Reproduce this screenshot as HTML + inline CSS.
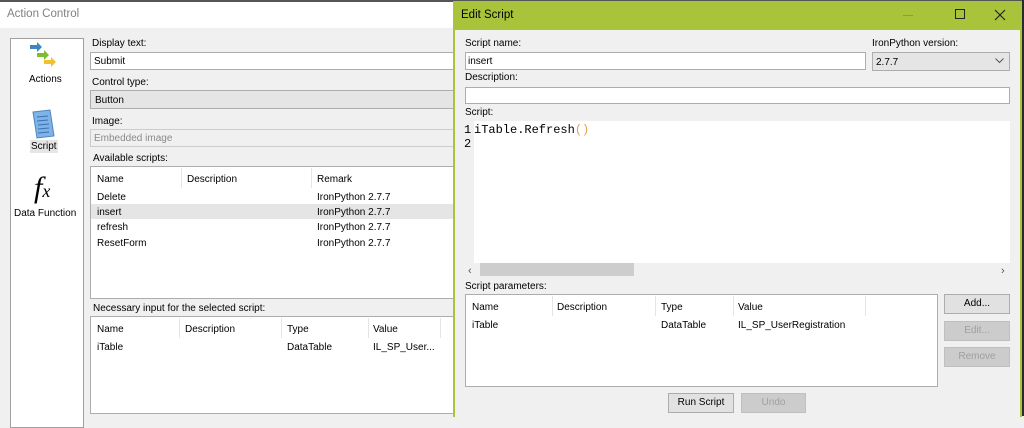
<!DOCTYPE html>
<html><head><meta charset="utf-8"><style>
*{margin:0;padding:0;box-sizing:border-box}
body{width:1024px;height:416px;overflow:hidden;background:#f0f0f0;font-family:"Liberation Sans",sans-serif;font-size:10px;color:#000;position:relative}
.a{position:absolute;white-space:nowrap}
.box{position:absolute;background:#fff;border:1px solid #adadad}
.btn{position:absolute;background:#e1e1e1;border:1px solid #adadad;text-align:center;line-height:17px}
.dis{background:#ccc;border-color:#bfbfbf;color:#a0a0a0}
.sep{position:absolute;width:1px;background:#e5e5e5}
</style></head><body>
<div class="a" style="left:0;top:0;width:1024px;height:2px;background:#555"></div>
<div class="a" style="left:0;top:2px;width:454px;height:26px;background:#fff"></div>
<div class="a" style="left:7px;top:8px;font-size:11.5px;color:#808080">Action Control</div>

<div class="box" style="left:10px;top:38px;width:74px;height:390px;border-color:#a0a0a0"></div>
<svg class="a" style="left:28px;top:40px" width="32" height="30" viewBox="0 0 32 30">
<path d="M2 5h7v-3l5 5-5 5v-3h-7z" fill="#3f86c0"/>
<path d="M9 13h7v-3l5 5-5 5v-3h-7z" fill="#7cbf2e"/>
<path d="M16 20h7v-3l5 5-5 5v-3h-7z" fill="#f2c12e"/>
</svg>
<div class="a" style="left:29px;top:74px">Actions</div>
<svg class="a" style="left:31px;top:109px" width="26" height="30" viewBox="0 0 26 30">
<path d="M2 3l17-2 4 26-17 2z" fill="#7fb2e6" stroke="#4d86c4"/>
<path d="M6 8l11-1M6 12l11-1M7 16l11-1M7 20l11-1M7 24l11-1" stroke="#3a72b0" stroke-width="1"/>
</svg>
<div class="a" style="left:30px;top:140px;background:#e5e5e5;padding:1px 1px">Script</div>
<div class="a" style="left:34px;top:173px;font-family:'Liberation Serif',serif;font-style:italic;font-size:30px;line-height:30px">f<span style="font-size:18px">x</span></div>
<div class="a" style="left:14px;top:208px">Data Function</div>

<div class="a" style="left:92px;top:38px">Display text:</div>
<div class="box" style="left:90px;top:52px;width:370px;height:18px;padding:3px 3px">Submit</div>
<div class="a" style="left:92px;top:77px">Control type:</div>
<div class="box" style="left:90px;top:90px;width:370px;height:19px;background:#e5e5e5;padding:4px 4px">Button</div>
<div class="a" style="left:92px;top:116px">Image:</div>
<div class="box" style="left:90px;top:129px;width:370px;height:18px;background:#f0f0f0;border-color:#ccc;color:#8a8a8a;padding:3px 3px">Embedded image</div>
<div class="a" style="left:93px;top:153px">Available scripts:</div>
<div class="box" style="left:90px;top:166px;width:370px;height:133px"></div>
<div class="sep" style="left:181px;top:168px;height:20px"></div>
<div class="sep" style="left:311px;top:168px;height:20px"></div>
<div class="a" style="left:97px;top:174px">Name</div>
<div class="a" style="left:187px;top:174px">Description</div>
<div class="a" style="left:317px;top:174px">Remark</div>
<div class="a" style="left:91px;top:204px;width:362px;height:15px;background:#e5e5e5"></div>
<div class="a" style="left:97px;top:192px">Delete</div><div class="a" style="left:317px;top:192px">IronPython 2.7.7</div>
<div class="a" style="left:97px;top:207px">insert</div><div class="a" style="left:317px;top:207px">IronPython 2.7.7</div>
<div class="a" style="left:97px;top:222px">refresh</div><div class="a" style="left:317px;top:222px">IronPython 2.7.7</div>
<div class="a" style="left:97px;top:238px">ResetForm</div><div class="a" style="left:317px;top:238px">IronPython 2.7.7</div>
<div class="a" style="left:93px;top:303px">Necessary input for the selected script:</div>
<div class="box" style="left:90px;top:316px;width:370px;height:98px"></div>
<div class="sep" style="left:179px;top:318px;height:20px"></div>
<div class="sep" style="left:281px;top:318px;height:20px"></div>
<div class="sep" style="left:368px;top:318px;height:20px"></div>
<div class="sep" style="left:440px;top:318px;height:20px"></div>
<div class="a" style="left:97px;top:324px">Name</div>
<div class="a" style="left:185px;top:324px">Description</div>
<div class="a" style="left:287px;top:324px">Type</div>
<div class="a" style="left:373px;top:324px">Value</div>
<div class="a" style="left:97px;top:342px">iTable</div>
<div class="a" style="left:287px;top:342px">DataTable</div>
<div class="a" style="left:373px;top:342px">IL_SP_User...</div>

<div class="a" style="left:453px;top:1px;width:569px;height:416px;background:#f0f0f0;border-left:2px solid #a9c43a;border-right:2px solid #a9c43a"></div>
<div class="a" style="left:1022px;top:0;width:2px;height:416px;background:#2a2a2a"></div>
<div class="a" style="left:453px;top:1px;width:569px;height:29px;background:#a9c43a"></div>
<div class="a" style="left:461px;top:9px;font-size:11.5px">Edit Script</div>
<div class="a" style="left:903px;top:15px;width:10px;height:1px;background:#8aa030"></div>
<div class="a" style="left:955px;top:9px;width:10px;height:10px;border:1px solid #222"></div>
<svg class="a" style="left:994px;top:9px" width="12" height="12"><path d="M1 1l10 10M11 1l-10 10" stroke="#222" stroke-width="1.2"/></svg>

<div class="a" style="left:465px;top:38px">Script name:</div>
<div class="box" style="left:465px;top:52px;width:401px;height:18px;padding:3px 2px">insert</div>
<div class="a" style="left:872px;top:38px">IronPython version:</div>
<div class="box" style="left:872px;top:52px;width:138px;height:19px;background:#e5e5e5;padding:4px 3px">2.7.7</div>
<svg class="a" style="left:995px;top:58px" width="9" height="6"><path d="M0.5 0.5l4 4 4-4" fill="none" stroke="#555"/></svg>
<div class="a" style="left:465px;top:72px">Description:</div>
<div class="box" style="left:465px;top:87px;width:545px;height:17px"></div>
<div class="a" style="left:465px;top:107px">Script:</div>
<div class="a" style="left:474px;top:121px;width:536px;height:142px;background:#fff"></div>
<div class="a" style="left:464px;top:123px;font-family:'Liberation Mono',monospace;font-size:12px;line-height:14px">1<br>2</div>
<div class="a" style="left:474px;top:123px;font-family:'Liberation Mono',monospace;font-size:12px;line-height:14px">iTable.Refresh<span style="color:#e0a050">()</span></div>
<div class="a" style="left:468px;top:265px;font-size:11px;color:#555">&lsaquo;</div>
<div class="a" style="left:480px;top:263px;width:154px;height:13px;background:#cdcdcd"></div>
<div class="a" style="left:1001px;top:265px;font-size:11px;color:#555">&rsaquo;</div>
<div class="a" style="left:465px;top:281px">Script parameters:</div>
<div class="box" style="left:465px;top:294px;width:473px;height:93px"></div>
<div class="sep" style="left:552px;top:296px;height:20px"></div>
<div class="sep" style="left:655px;top:296px;height:20px"></div>
<div class="sep" style="left:733px;top:296px;height:20px"></div>
<div class="sep" style="left:865px;top:296px;height:20px"></div>
<div class="a" style="left:472px;top:302px">Name</div>
<div class="a" style="left:557px;top:302px">Description</div>
<div class="a" style="left:661px;top:302px">Type</div>
<div class="a" style="left:738px;top:302px">Value</div>
<div class="a" style="left:472px;top:320px">iTable</div>
<div class="a" style="left:661px;top:320px">DataTable</div>
<div class="a" style="left:738px;top:320px">IL_SP_UserRegistration</div>
<div class="btn" style="left:944px;top:294px;width:66px;height:20px">Add...</div>
<div class="btn dis" style="left:944px;top:321px;width:66px;height:20px">Edit...</div>
<div class="btn dis" style="left:944px;top:347px;width:66px;height:20px">Remove</div>
<div class="btn" style="left:668px;top:393px;width:66px;height:20px">Run Script</div>
<div class="btn dis" style="left:741px;top:393px;width:65px;height:20px">Undo</div>
</body></html>
